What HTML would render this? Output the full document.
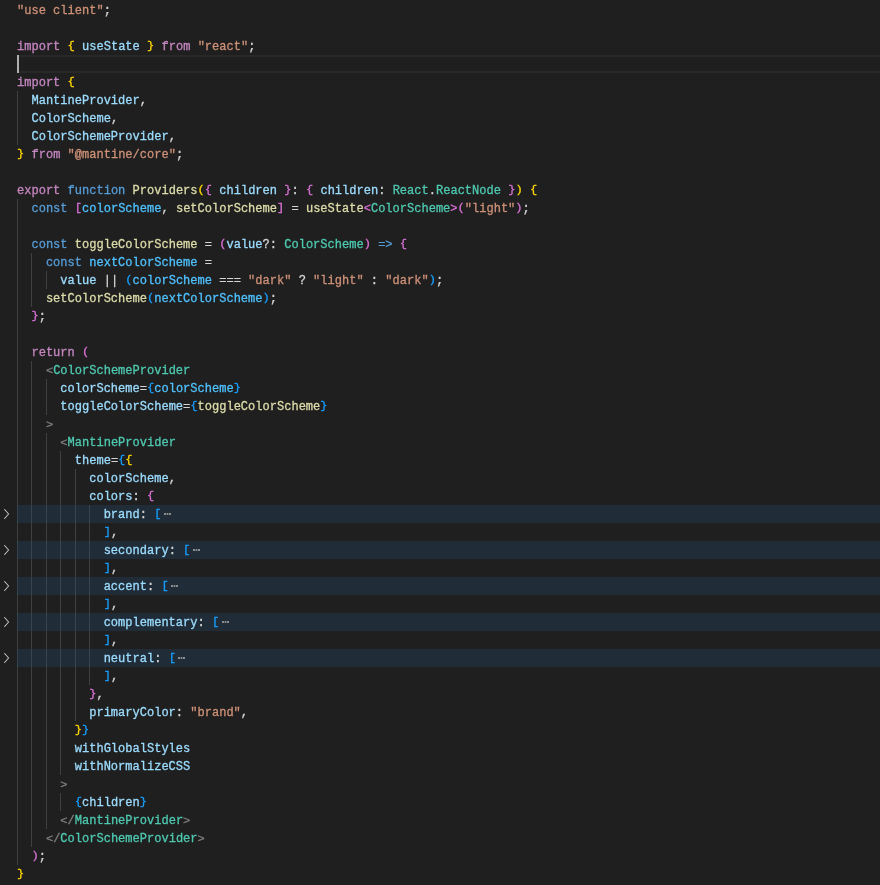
<!DOCTYPE html>
<html><head><meta charset="utf-8"><style>
html,body{margin:0;padding:0;background:#1f1f1f;width:880px;height:885px;overflow:hidden;}
#ed{position:relative;-webkit-font-smoothing:antialiased;width:880px;height:885px;background:#1f1f1f;font-family:"Liberation Mono",monospace;font-size:12.04px;}
.ln{position:absolute;left:17px;padding-top:1px;will-change:transform;-webkit-text-stroke:0.3px currentColor;height:18px;line-height:18px;white-space:pre;color:#d4d4d4;}
.fb{position:absolute;left:17px;width:863px;height:18px;background:rgba(38,79,120,0.3);}
.cl{position:absolute;left:17px;width:863px;height:14px;border-top:2px solid #282828;border-bottom:2px solid #282828;}
.cur{position:absolute;left:17px;width:2px;height:18px;background:#aeafad;}
.gd{position:absolute;width:1px;background:#404040;}
.fa{position:absolute;left:0;width:17px;height:18px;}
.el{position:absolute;}
.el i{position:absolute;top:0;width:2px;height:2px;background:#8b8b8b;}
.k{color:#c586c0}.s{color:#569cd6}.t{color:#ce9178}.v{color:#9cdcfe}.c{color:#4fc1ff}.f{color:#dcdcaa}.y{color:#4ec9b0}.p{color:#d4d4d4}.g{color:#808080}
.br{display:inline-block;transform:translateY(0.6px) scaleY(0.87);transform-origin:50% -3.5px}
.ab{display:inline-block;transform:scaleY(0.85);transform-origin:50% 11px}
.b1{color:#ffd700}.b2{color:#da70d6}.b3{color:#179fff}
</style></head><body><div id="ed">
<div class="cl" style="top:55px"></div>
<div class="gd" style="left:17px;top:91px;height:54px"></div>
<div class="gd" style="left:17px;top:199px;height:666px"></div>
<div class="gd" style="left:31px;top:253px;height:54px"></div>
<div class="gd" style="left:31px;top:361px;height:486px"></div>
<div class="gd" style="left:46px;top:271px;height:18px"></div>
<div class="gd" style="left:46px;top:379px;height:36px"></div>
<div class="gd" style="left:46px;top:433px;height:396px"></div>
<div class="gd" style="left:60px;top:451px;height:324px"></div>
<div class="gd" style="left:60px;top:793px;height:18px"></div>
<div class="gd" style="left:75px;top:469px;height:252px"></div>
<div class="gd" style="left:89px;top:505px;height:180px"></div>
<div class="fb" style="top:505px"></div>
<div class="fb" style="top:541px"></div>
<div class="fb" style="top:577px"></div>
<div class="fb" style="top:613px"></div>
<div class="fb" style="top:649px"></div>
<div class="ln" style="top:1px"><span class="t">"use client"</span><span class="p">;</span></div>
<div class="ln" style="top:19px"></div>
<div class="ln" style="top:37px"><span class="k">import</span><span class="p"> </span><span class="b1 br">{</span><span class="p"> </span><span class="v">useState</span><span class="p"> </span><span class="b1 br">}</span><span class="p"> </span><span class="k">from</span><span class="p"> </span><span class="t">"react"</span><span class="p">;</span></div>
<div class="ln" style="top:55px"></div>
<div class="ln" style="top:73px"><span class="k">import</span><span class="p"> </span><span class="b1 br">{</span></div>
<div class="ln" style="top:91px"><span class="p">  </span><span class="v">MantineProvider</span><span class="p">,</span></div>
<div class="ln" style="top:109px"><span class="p">  </span><span class="v">ColorScheme</span><span class="p">,</span></div>
<div class="ln" style="top:127px"><span class="p">  </span><span class="v">ColorSchemeProvider</span><span class="p">,</span></div>
<div class="ln" style="top:145px"><span class="b1 br">}</span><span class="p"> </span><span class="k">from</span><span class="p"> </span><span class="t">"@mantine/core"</span><span class="p">;</span></div>
<div class="ln" style="top:163px"></div>
<div class="ln" style="top:181px"><span class="k">export</span><span class="p"> </span><span class="s">function</span><span class="p"> </span><span class="f">Providers</span><span class="b1 br">(</span><span class="b2 br">{</span><span class="p"> </span><span class="v">children</span><span class="p"> </span><span class="b2 br">}</span><span class="p">: </span><span class="b2 br">{</span><span class="p"> </span><span class="v">children</span><span class="p">: </span><span class="y">React</span><span class="p">.</span><span class="y">ReactNode</span><span class="p"> </span><span class="b2 br">}</span><span class="b1 br">)</span><span class="p"> </span><span class="b1 br">{</span></div>
<div class="ln" style="top:199px"><span class="p">  </span><span class="s">const</span><span class="p"> </span><span class="b2 br">[</span><span class="c">colorScheme</span><span class="p">, </span><span class="f">setColorScheme</span><span class="b2 br">]</span><span class="p"> = </span><span class="f">useState</span><span class="b2">&lt;</span><span class="y">ColorScheme</span><span class="b2">&gt;</span><span class="b2 br">(</span><span class="t">"light"</span><span class="b2 br">)</span><span class="p">;</span></div>
<div class="ln" style="top:217px"></div>
<div class="ln" style="top:235px"><span class="p">  </span><span class="s">const</span><span class="p"> </span><span class="f">toggleColorScheme</span><span class="p"> = </span><span class="b2 br">(</span><span class="v">value</span><span class="p">?: </span><span class="y">ColorScheme</span><span class="b2 br">)</span><span class="p"> </span><span class="s">=&gt;</span><span class="p"> </span><span class="b2 br">{</span></div>
<div class="ln" style="top:253px"><span class="p">    </span><span class="s">const</span><span class="p"> </span><span class="c">nextColorScheme</span><span class="p"> =</span></div>
<div class="ln" style="top:271px"><span class="p">      </span><span class="v">value</span><span class="p"> || </span><span class="b3 br">(</span><span class="c">colorScheme</span><span class="p"> === </span><span class="t">"dark"</span><span class="p"> ? </span><span class="t">"light"</span><span class="p"> : </span><span class="t">"dark"</span><span class="b3 br">)</span><span class="p">;</span></div>
<div class="ln" style="top:289px"><span class="p">    </span><span class="f">setColorScheme</span><span class="b3 br">(</span><span class="c">nextColorScheme</span><span class="b3 br">)</span><span class="p">;</span></div>
<div class="ln" style="top:307px"><span class="p">  </span><span class="b2 br">}</span><span class="p">;</span></div>
<div class="ln" style="top:325px"></div>
<div class="ln" style="top:343px"><span class="p">  </span><span class="k">return</span><span class="p"> </span><span class="b2 br">(</span></div>
<div class="ln" style="top:361px"><span class="p">    </span><span class="g ab">&lt;</span><span class="y">ColorSchemeProvider</span></div>
<div class="ln" style="top:379px"><span class="p">      </span><span class="v">colorScheme</span><span class="p">=</span><span class="b3 br">{</span><span class="c">colorScheme</span><span class="b3 br">}</span></div>
<div class="ln" style="top:397px"><span class="p">      </span><span class="v">toggleColorScheme</span><span class="p">=</span><span class="b3 br">{</span><span class="f">toggleColorScheme</span><span class="b3 br">}</span></div>
<div class="ln" style="top:415px"><span class="p">    </span><span class="g ab">&gt;</span></div>
<div class="ln" style="top:433px"><span class="p">      </span><span class="g ab">&lt;</span><span class="y">MantineProvider</span></div>
<div class="ln" style="top:451px"><span class="p">        </span><span class="v">theme</span><span class="p">=</span><span class="b3 br">{</span><span class="b1 br">{</span></div>
<div class="ln" style="top:469px"><span class="p">          </span><span class="v">colorScheme</span><span class="p">,</span></div>
<div class="ln" style="top:487px"><span class="p">          </span><span class="v">colors</span><span class="p">: </span><span class="b2 br">{</span></div>
<svg class="el" style="left:164px;top:513px" width="7" height="3" viewBox="0 0 7 3"><rect x="0" y="0" width="2" height="2" fill="#8b8b8b"/><rect x="2.6" y="0" width="1.8" height="2" fill="#8b8b8b"/><rect x="5" y="0" width="2" height="2" fill="#8b8b8b"/></svg>
<div class="ln" style="top:505px"><span class="p">            </span><span class="v">brand</span><span class="p">: </span><span class="b3 br">[</span></div>
<div class="ln" style="top:523px"><span class="p">            </span><span class="b3 br">]</span><span class="p">,</span></div>
<svg class="el" style="left:193px;top:549px" width="7" height="3" viewBox="0 0 7 3"><rect x="0" y="0" width="2" height="2" fill="#8b8b8b"/><rect x="2.6" y="0" width="1.8" height="2" fill="#8b8b8b"/><rect x="5" y="0" width="2" height="2" fill="#8b8b8b"/></svg>
<div class="ln" style="top:541px"><span class="p">            </span><span class="v">secondary</span><span class="p">: </span><span class="b3 br">[</span></div>
<div class="ln" style="top:559px"><span class="p">            </span><span class="b3 br">]</span><span class="p">,</span></div>
<svg class="el" style="left:171px;top:585px" width="7" height="3" viewBox="0 0 7 3"><rect x="0" y="0" width="2" height="2" fill="#8b8b8b"/><rect x="2.6" y="0" width="1.8" height="2" fill="#8b8b8b"/><rect x="5" y="0" width="2" height="2" fill="#8b8b8b"/></svg>
<div class="ln" style="top:577px"><span class="p">            </span><span class="v">accent</span><span class="p">: </span><span class="b3 br">[</span></div>
<div class="ln" style="top:595px"><span class="p">            </span><span class="b3 br">]</span><span class="p">,</span></div>
<svg class="el" style="left:222px;top:621px" width="7" height="3" viewBox="0 0 7 3"><rect x="0" y="0" width="2" height="2" fill="#8b8b8b"/><rect x="2.6" y="0" width="1.8" height="2" fill="#8b8b8b"/><rect x="5" y="0" width="2" height="2" fill="#8b8b8b"/></svg>
<div class="ln" style="top:613px"><span class="p">            </span><span class="v">complementary</span><span class="p">: </span><span class="b3 br">[</span></div>
<div class="ln" style="top:631px"><span class="p">            </span><span class="b3 br">]</span><span class="p">,</span></div>
<svg class="el" style="left:178px;top:657px" width="7" height="3" viewBox="0 0 7 3"><rect x="0" y="0" width="2" height="2" fill="#8b8b8b"/><rect x="2.6" y="0" width="1.8" height="2" fill="#8b8b8b"/><rect x="5" y="0" width="2" height="2" fill="#8b8b8b"/></svg>
<div class="ln" style="top:649px"><span class="p">            </span><span class="v">neutral</span><span class="p">: </span><span class="b3 br">[</span></div>
<div class="ln" style="top:667px"><span class="p">            </span><span class="b3 br">]</span><span class="p">,</span></div>
<div class="ln" style="top:685px"><span class="p">          </span><span class="b2 br">}</span><span class="p">,</span></div>
<div class="ln" style="top:703px"><span class="p">          </span><span class="v">primaryColor</span><span class="p">: </span><span class="t">"brand"</span><span class="p">,</span></div>
<div class="ln" style="top:721px"><span class="p">        </span><span class="b1 br">}</span><span class="b3 br">}</span></div>
<div class="ln" style="top:739px"><span class="p">        </span><span class="v">withGlobalStyles</span></div>
<div class="ln" style="top:757px"><span class="p">        </span><span class="v">withNormalizeCSS</span></div>
<div class="ln" style="top:775px"><span class="p">      </span><span class="g ab">&gt;</span></div>
<div class="ln" style="top:793px"><span class="p">        </span><span class="b3 br">{</span><span class="v">children</span><span class="b3 br">}</span></div>
<div class="ln" style="top:811px"><span class="p">      </span><span class="g ab">&lt;</span><span class="g">/</span><span class="y">MantineProvider</span><span class="g ab">&gt;</span></div>
<div class="ln" style="top:829px"><span class="p">    </span><span class="g ab">&lt;</span><span class="g">/</span><span class="y">ColorSchemeProvider</span><span class="g ab">&gt;</span></div>
<div class="ln" style="top:847px"><span class="p">  </span><span class="b2 br">)</span><span class="p">;</span></div>
<div class="ln" style="top:865px"><span class="b1 br">}</span></div>
<svg class="fa" style="top:505px" width="17" height="18" viewBox="0 0 17 18"><path d="M4.6 4.5 L8.6 9 L4.6 13.5" fill="none" stroke="#c2c2c2" stroke-width="1.1" stroke-linecap="round" stroke-linejoin="round"/></svg>
<svg class="fa" style="top:541px" width="17" height="18" viewBox="0 0 17 18"><path d="M4.6 4.5 L8.6 9 L4.6 13.5" fill="none" stroke="#c2c2c2" stroke-width="1.1" stroke-linecap="round" stroke-linejoin="round"/></svg>
<svg class="fa" style="top:577px" width="17" height="18" viewBox="0 0 17 18"><path d="M4.6 4.5 L8.6 9 L4.6 13.5" fill="none" stroke="#c2c2c2" stroke-width="1.1" stroke-linecap="round" stroke-linejoin="round"/></svg>
<svg class="fa" style="top:613px" width="17" height="18" viewBox="0 0 17 18"><path d="M4.6 4.5 L8.6 9 L4.6 13.5" fill="none" stroke="#c2c2c2" stroke-width="1.1" stroke-linecap="round" stroke-linejoin="round"/></svg>
<svg class="fa" style="top:649px" width="17" height="18" viewBox="0 0 17 18"><path d="M4.6 4.5 L8.6 9 L4.6 13.5" fill="none" stroke="#c2c2c2" stroke-width="1.1" stroke-linecap="round" stroke-linejoin="round"/></svg>
<div class="cur" style="top:55px"></div>
</div></body></html>
